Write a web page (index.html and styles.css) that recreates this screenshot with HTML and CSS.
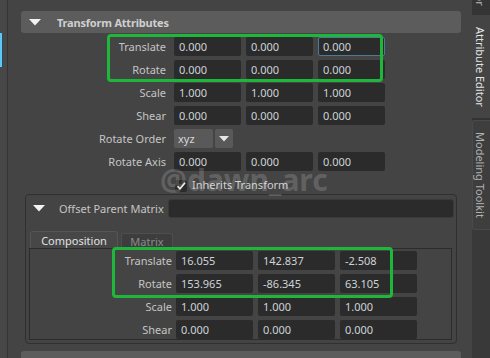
FILE: index.html
```html
<!DOCTYPE html>
<html>
<head>
<meta charset="utf-8">
<link rel="stylesheet" href="styles.css">
</head>
<body>
<div class="app">
  <div class="leftbar"><div class="sel"></div></div>
  <div class="main">
    <div class="sec-head">
      <svg class="tri" width="12" height="7" viewBox="0 0 12 7"><path d="M0 0H12L6 6.5Z" fill="#f2f2f2"/></svg>
      <span class="sec-title">Transform Attributes</span>
    </div>
    <div class="rows">
      <div class="row"><span class="lbl">Translate</span><span class="f">0.000</span><span class="f">0.000</span><span class="f focus">0.000</span></div>
      <div class="row"><span class="lbl">Rotate</span><span class="f">0.000</span><span class="f">0.000</span><span class="f">0.000</span></div>
      <div class="row"><span class="lbl">Scale</span><span class="f">1.000</span><span class="f">1.000</span><span class="f">1.000</span></div>
      <div class="row"><span class="lbl">Shear</span><span class="f">0.000</span><span class="f">0.000</span><span class="f">0.000</span></div>
      <div class="row"><span class="lbl">Rotate Order</span><span class="dd">xyz</span><span class="dd-btn"><svg width="10" height="6" viewBox="0 0 10 6"><path d="M0 0H10L5 5.5Z" fill="#e6e6e6"/></svg></span></div>
      <div class="row"><span class="lbl">Rotate Axis</span><span class="f">0.000</span><span class="f">0.000</span><span class="f">0.000</span></div>
      <div class="row"><span class="lbl"></span><span class="cb"><svg width="12" height="12" viewBox="0 0 12 12"><path d="M2.5 6.2L5 8.8L10 2.8" fill="none" stroke="#f0f0f0" stroke-width="1.6"/></svg></span><span class="cb-text">Inherits Transform</span></div>
    </div>
    <div class="frame">
      <div class="frame-head">
        <svg class="tri2" width="12" height="7" viewBox="0 0 12 7"><path d="M0 0H12L6 6.5Z" fill="#f2f2f2"/></svg>
        <span class="frame-title">Offset Parent Matrix</span>
        <span class="wide-field"></span>
      </div>
      <div class="tabs">
        <span class="tab active">Composition</span>
        <span class="tab">Matrix</span>
      </div>
      <div class="panel">
        <div class="prow"><span class="plbl">Translate</span><span class="pf">16.055</span><span class="pf">142.837</span><span class="pf">-2.508</span></div>
        <div class="prow"><span class="plbl">Rotate</span><span class="pf">153.965</span><span class="pf">-86.345</span><span class="pf">63.105</span></div>
        <div class="prow"><span class="plbl">Scale</span><span class="pf">1.000</span><span class="pf">1.000</span><span class="pf">1.000</span></div>
        <div class="prow"><span class="plbl">Shear</span><span class="pf">0.000</span><span class="pf">0.000</span><span class="pf">0.000</span></div>
      </div>
    </div>
    <div class="sec-head next">
      <svg class="tri-r" width="6" height="10" viewBox="0 0 6 10"><path d="M0 0L5.5 5L0 10Z" fill="#f2f2f2"/></svg>
    </div>
  </div>
  <div class="side">
    <div class="stab top"><span class="vt">Channel Box / Layer Editor</span></div>
    <div class="stab ae"><span class="vt">Attribute Editor</span></div>
    <div class="sgap"></div>
    <div class="stab mt"><span class="vt">Modeling Toolkit</span></div>
  </div>
</div>
<div class="hl hl1"></div>
<div class="hl hl2"></div>
<div class="watermark">@dawn_arc</div>
</body>
</html>
```
FILE: styles.css
```css
html, body {
  margin: 0;
  padding: 0;
}
body {
  width: 490px;
  height: 358px;
  overflow: hidden;
  background: #444444;
  font-family: "Noto Sans", "Open Sans", sans-serif;
  font-size: 11px;
  color: #c8c8c8;
  position: relative;
}
.app {
  display: flex;
  height: 358px;
}
.leftbar {
  width: 7px;
  border-right: 1px solid #343434;
  background: #474747;
  flex: none;
}
.sel {
  margin-top: 33px;
  height: 34px;
  width: 2px;
  background: #5bc8f3;
  border-right: 1px solid #2b4b5a;
}
.main {
  width: 464px;
  flex: none;
  padding-top: 11px;
}
.sec-head {
  margin-left: 13px;
  width: 440px;
  height: 22px;
  background: #5c5c5c;
  border-radius: 3px;
  display: flex;
  align-items: center;
}
.tri {
  margin-left: 8px;
  flex: none;
}
.sec-title {
  margin-left: 16px;
  font-weight: bold;
  color: #cfcfcf;
  font-size: 11px;
  letter-spacing: -0.2px;
}
.rows {
  margin-top: 4px;
  margin-left: 13px;
  display: flex;
  flex-direction: column;
  gap: 4px;
}
.row {
  display: flex;
  height: 19px;
  align-items: center;
}
.lbl {
  width: 145px;
  margin-right: 8px;
  text-align: right;
  color: #c4c4c4;
  flex: none;
}
.f {
  width: 67px;
  height: 19px;
  line-height: 19px;
  box-sizing: border-box;
  padding-left: 5px;
  background: #2b2b2b;
  border-radius: 2px;
  margin-right: 5px;
  color: #cdd3d8;
  flex: none;
}
.f.focus {
  border: 1px solid #4f7896;
  line-height: 17px;
  padding-left: 4px;
}
.dd {
  width: 39px;
  height: 19px;
  line-height: 19px;
  box-sizing: border-box;
  padding-left: 4px;
  background: #595959;
  border-radius: 2px;
  color: #d8d8d8;
  flex: none;
}
.dd-btn {
  margin-left: 2px;
  width: 18px;
  height: 19px;
  background: #595959;
  border-radius: 2px;
  display: flex;
  align-items: center;
  justify-content: center;
  flex: none;
}
.cb {
  width: 12px;
  height: 12px;
  background: #2b2b2b;
  border-radius: 2px;
  margin-left: 1px;
  margin-top: 2px;
  display: flex;
  flex: none;
}
.cb-text {
  margin-left: 5px;
  color: #cfcfcf;
}
.frame {
  margin-left: 17px;
  width: 432px;
  height: 150px;
  box-sizing: border-box;
  border: 1px solid #303030;
  border-radius: 4px;
  padding-top: 4px;
}
.frame-head {
  display: flex;
  align-items: center;
  height: 19px;
}
.tri2 {
  margin-left: 7px;
  flex: none;
}
.frame-title {
  margin-left: 14px;
  color: #c4c4c4;
  width: 109px;
  flex: none;
}
.wide-field {
  width: 286px;
  height: 19px;
  box-sizing: border-box;
  background: #2b2b2b;
  border: 1px solid #3a3a3a;
  border-radius: 3px;
}
.tabs {
  margin-top: 13px;
  margin-left: 4px;
  display: flex;
  align-items: flex-end;
  gap: 3px;
  height: 17px;
}
.tab {
  height: 15px;
  width: 52px;
  box-sizing: border-box;
  background: #3d3d3d;
  border: 1px solid #4e4e4e;
  border-bottom: none;
  border-radius: 3px 3px 0 0;
  text-align: center;
  line-height: 15px;
  color: #8a8a8a;
}
.tab.active {
  height: 17px;
  width: 88px;
  background: #474747;
  border-color: #555555;
  line-height: 18px;
  color: #e2e2e2;
}
.panel {
  margin-left: 3px;
  width: 423px;
  height: 92px;
  box-sizing: border-box;
  border: 1px solid #2c2c2c;
  padding-top: 2px;
  display: flex;
  flex-direction: column;
  gap: 4px;
}
.prow {
  display: flex;
  height: 19px;
  align-items: center;
}
.plbl {
  width: 142px;
  margin-right: 4px;
  text-align: right;
  color: #c4c4c4;
  flex: none;
}
.pf {
  width: 77px;
  height: 19px;
  line-height: 19px;
  box-sizing: border-box;
  padding-left: 5px;
  background: #2b2b2b;
  border-radius: 2px;
  margin-right: 5px;
  color: #cdd3d8;
  flex: none;
}
.sec-head.next {
  margin-top: 7px;
}
.tri-r {
  margin-left: 11px;
  margin-top: 6px;
}
.side {
  width: 18px;
  flex: none;
  display: flex;
  flex-direction: column;
  background: #393939;
}
.stab {
  overflow: hidden;
  display: flex;
  flex-direction: column;
  align-items: center;
  flex: none;
}
.vt {
  writing-mode: vertical-rl;
  white-space: nowrap;
  font-size: 11px;
  line-height: 14px;
  margin-left: -3px;
}
.stab.top {
  height: 15px;
  background: #353535;
  justify-content: flex-end;
  padding-bottom: 0;
  color: #bbbbbb;
}
.stab.top .vt {
  margin-bottom: 9px;
}
.stab.ae {
  height: 103px;
  background: #444444;
  color: #e4e4e4;
  padding-top: 12px;
  box-sizing: border-box;
}
.sgap {
  height: 2px;
  background: #333333;
}
.stab.mt {
  height: 110px;
  box-sizing: border-box;
  background: #3e3e3e;
  border: 1px solid #4a4a4a;
  border-right: none;
  border-radius: 3px 0 0 3px;
  color: #b2b2b2;
  padding-top: 11px;
}
.hl {
  position: absolute;
  border: 3px solid #1db83a;
  border-radius: 4px;
  box-sizing: border-box;
}
.hl1 {
  left: 107px;
  top: 34px;
  width: 276px;
  height: 48px;
}
.hl2 {
  left: 112px;
  top: 247px;
  width: 281px;
  height: 51px;
}
.watermark {
  position: absolute;
  left: 160px;
  top: 165px;
  font-size: 30px;
  line-height: 30px;
  font-weight: bold;
  color: rgba(255, 255, 255, 0.17);
  pointer-events: none;
  white-space: nowrap;
}
```
